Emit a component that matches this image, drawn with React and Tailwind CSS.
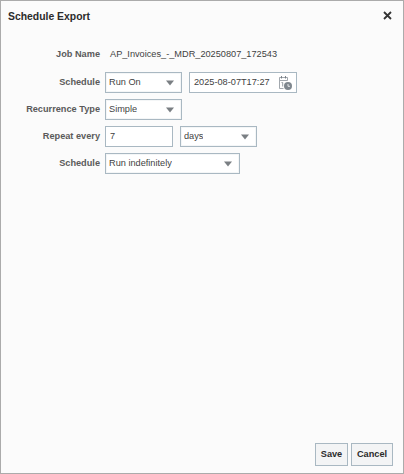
import React from "react";

const Select = ({ value, className }) => (
  <div
    className={`flex h-[21px] items-center justify-between border border-[#a9b8c2] bg-white pl-[3px] shadow-[inset_0_0_0_1px_#f4f6f7] ${className}`}
  >
    <span className="truncate">{value}</span>
    <svg width="20" height="8" viewBox="0 0 20 8" className="shrink-0">
      <path d="M5 1.5h8l-4 5z" fill="#7a7f83" />
    </svg>
  </div>
);

const CalendarIcon = () => (
  <svg width="16" height="16" viewBox="0 0 16 16">
    <path d="M2.5 2.5h8v3h-8z" fill="none" stroke="#8a9299" strokeWidth="0.8" />
    <path d="M2.5 5.5v8h4" fill="none" stroke="#8a9299" strokeWidth="0.8" />
    <path d="M4.5 1v2.5M8.5 1v2.5" stroke="#6f777e" strokeWidth="0.9" />
    <path d="M4.5 7.5h1.2v4" fill="none" stroke="#8a9299" strokeWidth="0.9" />
    <circle cx="11" cy="11" r="4" fill="#7f878e" />
    <path d="M11 9v2.3h2" fill="none" stroke="#fff" strokeWidth="0.8" />
  </svg>
);

const Label = ({ children }) => (
  <div className="text-right font-bold text-[#5a5a5a]">{children}</div>
);

export default function App() {
  return (
    <div className="flex h-[474px] w-[404px] flex-col border border-[#ababab] bg-[#fbfbfb] font-['Liberation_Sans',Arial,sans-serif] text-[9.2px] text-[#3f3f3f]">
      <div className="flex items-center justify-between pl-[7px] pr-[11px] pt-[8px]">
        <h1 className="text-[10.4px] leading-[16px] font-bold text-[#2b2b2b]">Schedule Export</h1>
        <svg width="9" height="9" viewBox="0 0 9 9" className="mb-[3px]">
          <path d="M1 1l7 7M8 1l-7 7" stroke="#333" strokeWidth="1.8" />
        </svg>
      </div>

      <div className="mt-[23px] grid grid-cols-[99px_1fr] items-center gap-x-[5px]">
        <Label>Job Name</Label>
        <div className="flex h-[14px] items-center pl-[5px]">AP_Invoices_-_MDR_20250807_172543</div>
      </div>

      <div className="mt-[10px] grid grid-cols-[99px_1fr] items-center gap-x-[5px] gap-y-[6px]">
        <Label>Schedule</Label>
        <div className="flex gap-[7px]">
          <Select value="Run On" className="w-[77px]" />
          <div className="flex h-[21px] w-[108px] items-center justify-between border border-[#a9b8c2] bg-white pl-[4px] pr-[3px]">
            <span className="whitespace-nowrap">2025-08-07T17:27</span>
            <CalendarIcon />
          </div>
        </div>

        <Label>Recurrence Type</Label>
        <Select value="Simple" className="w-[77px]" />

        <Label>Repeat every</Label>
        <div className="flex gap-[7px]">
          <div className="flex h-[21px] w-[68px] items-center border border-[#a9b8c2] bg-white pl-[4px]">7</div>
          <Select value="days" className="w-[77px]" />
        </div>

        <Label>Schedule</Label>
        <Select value="Run indefinitely" className="w-[135px]" />
      </div>

      <div className="mt-auto flex justify-end gap-[3px] pb-[7px] pr-[10px]">
        <button className="h-[23px] w-[33px] border border-[#a9b8c2] bg-[#f3f4f5] font-bold text-[#2b2b2b]">Save</button>
        <button className="h-[23px] w-[42px] border border-[#a9b8c2] bg-[#f3f4f5] font-bold text-[#2b2b2b]">Cancel</button>
      </div>
    </div>
  );
}
